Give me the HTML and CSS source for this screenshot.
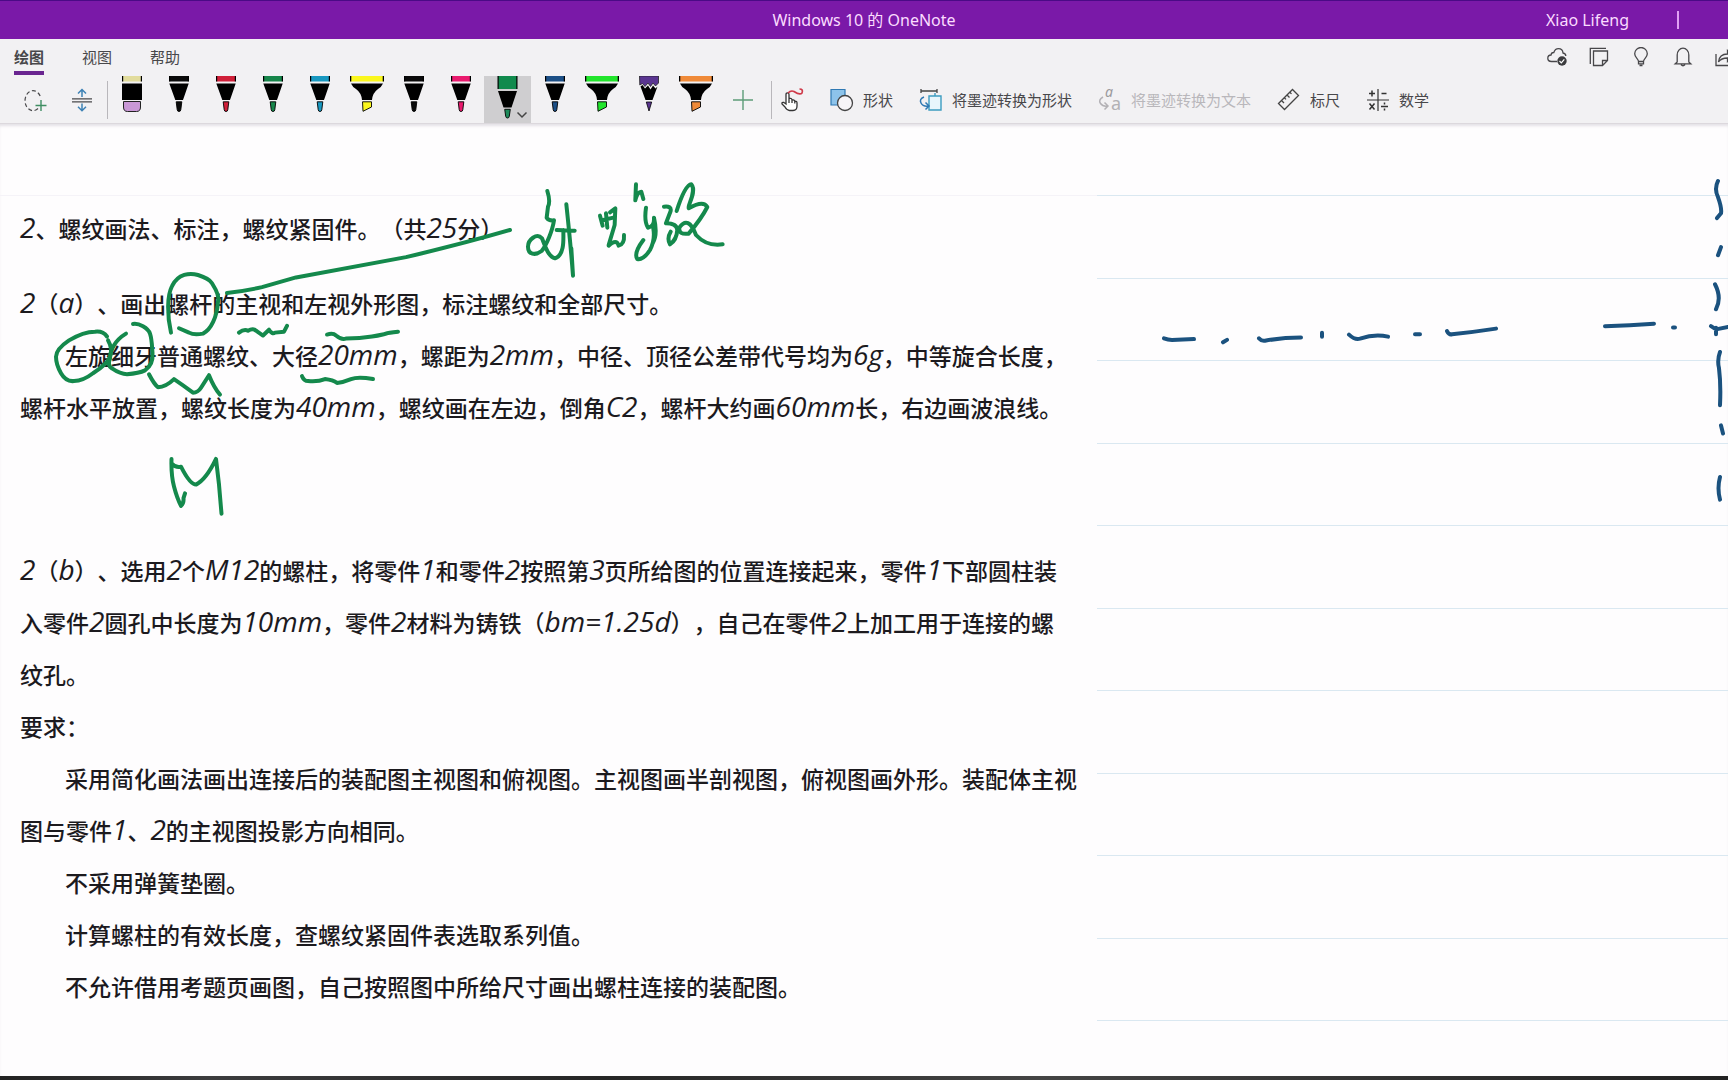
FILE: index.html
```html
<!DOCTYPE html>
<html lang="zh-CN">
<head>
<meta charset="utf-8">
<title>Windows 10 的 OneNote</title>
<link rel="stylesheet" href="styles.css">
</head>
<body>
<svg class="defs" aria-hidden="true">
  <defs>
    <symbol id="pen" viewBox="0 0 20 36">
      <path fill="currentColor" d="M.5 0h19v5.500H.5z"/><path fill="#000" d="M0 0h1.200v5.500H0zM18.800 0H20v5.500h-1.200zM.3 7.500h19.400L14 24H6.300z"/>
      <path fill="currentColor" stroke="#000" stroke-width=".9" d="M7.200 25.800h5.600l-1 8q-.2 1.700-1.800 1.700t-1.800-1.700z"/>
    </symbol>
    <symbol id="marker" viewBox="0 0 34 36">
      <path fill="currentColor" d="M.5 0h33v5.500H.5z"/><path fill="#000" d="M0 0h1.300v5.500H0zM32.700 0H34v5.500h-1.300zM1 7.500h32q-1.500 3.500-5 5.500Q22.500 17 22 24H12q-.5-7-6-11-3.500-2-5-5.500z"/>
      <path fill="currentColor" stroke="#000" stroke-width=".9" d="M12.500 25.800h9v5.200L13 35.300z"/>
    </symbol>
  </defs>
</svg>

<header class="titlebar">
  <h1 class="app-name">Windows 10 的 OneNote</h1>
  <div class="account"><span>Xiao Lifeng</span><span class="account-rule"></span></div>
</header>

<div class="ribbon">
  <div class="tabs-row">
    <nav class="tabs">
      <a class="tab tab-on" href="#draw">绘图</a>
      <a class="tab" href="#view">视图</a>
      <a class="tab" href="#help">帮助</a>
    </nav>
    <div class="quick">
      <button class="quick-button" aria-label="同步"><svg width="20" height="20" viewBox="0 0 20 20"><path class="line" d="M10 14.500H4.500C2 14.500.8 12.900.8 11.200c0-2 1.500-3.200 3.200-3.200.2-1.600 1.300-2.600 2.800-2.500C7.600 3 9.300 1.700 11.500 1.700c2.800 0 4.300 1.800 4.500 4.300 1.700.3 2.800 1.500 2.800 3"/><circle cx="15" cy="14" r="4.700" fill="#3c3c3e"/><path d="M12.500 14l1.800 1.800 3-3.500" fill="none" stroke="#fff" stroke-width="1.200"/></svg></button>
      <button class="quick-button" aria-label="便笺"><svg width="20" height="20" viewBox="0 0 20 20"><path class="line" d="M1.300 17V1.300H17M4.500 4h14v9.500l-5 5h-9zM13.500 18.500v-5h5"/></svg></button>
      <button class="quick-button" aria-label="操作说明"><svg width="20" height="20" viewBox="0 0 20 20"><path class="line" d="M7.500 14.500c0-2.500-3.800-4-3.800-7.700a6.300 6.300 0 0 1 12.600 0c0 3.700-3.800 5.200-3.800 7.700zM7.500 14.500v2.300h5v-2.300M8.500 18.500h3"/></svg></button>
      <button class="quick-button" aria-label="通知"><svg width="20" height="20" viewBox="0 0 20 20"><path class="line" d="M4.200 15V8a5.800 6.800 0 0 1 11.600 0v7l2 1.800H2.200zM8 17.500q2 2.500 4 0"/></svg></button>
      <button class="quick-button" aria-label="共享"><svg width="20" height="20" viewBox="0 0 20 20"><path class="line" d="M1 7v11.500h14M3.500 15c.5-5 3.500-8 9-8V3.500l6 5.500-6 5.500V11c-4 0-7 1-9 4z"/></svg></button>
    </div>
  </div>

  <div class="tools">
    <button class="tool" aria-label="套索选择"><svg class="mid" width="24" height="24" viewBox="0 0 24 24"><path d="M15 20.500A8 10 0 1 1 17.500 9" fill="none" stroke="#4a4a4c" stroke-width="1.200" stroke-dasharray="4 2.500"/><path d="M18 12v11M12.500 17.500h11" stroke="#3f8e62" stroke-width="1.400"/></svg></button>
    <button class="tool" aria-label="插入空间"><svg class="mid" width="22" height="24" viewBox="0 0 22 24"><path d="M1 10.800h20M1 13.800h20" stroke="#4a4a4c" stroke-width="1.300"/><path d="M11 9V1.500M7 5.500l4-4 4 4M11 15.500v7M7 18.700l4 4 4-4" fill="none" stroke="#3e82b5" stroke-width="1.500"/></svg></button>
    <span class="rule"></span>
    <div class="pens">
      <button class="tool" aria-label="橡皮擦"><svg width="20" height="36" viewBox="0 0 20 36"><path fill="#e2dc9c" d="M.5 0h19v5.500H.5z"/><path d="M0 0h1.200v5.500H0zM18.800 0H20v5.500h-1.200zM0 7.500h20V24H0z"/><path fill="#c998d6" stroke="#222" d="M1.500 25.500h17V31q0 4.500-4 4.500h-9q-4 0-4-4.500z"/></svg></button>
      <button class="tool black" aria-label="黑色笔"><svg width="20" height="36"><use href="#pen"/></svg></button>
      <button class="tool red" aria-label="红色笔"><svg width="20" height="36"><use href="#pen"/></svg></button>
      <button class="tool green" aria-label="绿色笔"><svg width="20" height="36"><use href="#pen"/></svg></button>
      <button class="tool cyan" aria-label="青色笔"><svg width="20" height="36"><use href="#pen"/></svg></button>
      <button class="tool yellow" aria-label="黄色荧光笔"><svg width="34" height="36"><use href="#marker"/></svg></button>
      <button class="tool black" aria-label="黑色细笔"><svg width="20" height="36"><use href="#pen"/></svg></button>
      <button class="tool pink" aria-label="粉色笔"><svg width="20" height="36"><use href="#pen"/></svg></button>
      <button class="tool tool-on" aria-label="绿色笔，已选择"><svg width="47" height="48" viewBox="0 0 47 48"><path fill="#118a4d" d="M14 0h19v13H14z"/><path d="M13.500 0h1.200v13h-1.200zM32.300 0h1.200v13h-1.200zM14 15h19l-5.500 16.500h-8z"/><path fill="#1d8a5a" stroke="#000" stroke-width=".9" d="M20.700 33.300h5.600l-1 7q-.2 1.700-1.800 1.700t-1.800-1.700z"/><path d="M33.500 36.500l4.500 4.500 4.500-4.500" fill="none" stroke="#444" stroke-width="1.500"/></svg></button>
      <button class="tool blue" aria-label="蓝色笔"><svg width="20" height="36"><use href="#pen"/></svg></button>
      <button class="tool lime" aria-label="绿色荧光笔"><svg width="34" height="36"><use href="#marker"/></svg></button>
      <button class="tool" aria-label="紫色铅笔"><svg width="20" height="36" viewBox="0 0 20 36"><path fill="#5a3591" stroke="#222" stroke-width=".8" d="M.5 0h19v7l-3 3-2.500-3-2.500 3.500L9 7l-3 3.500L3.500 7.500.8 9z"/><path d="M1.500 10.500l2-1.500L6 12.500 9 9.500l2.500 4L14 9.500l2.500 3 2-2L13.500 24h-7z"/><path fill="#5a3591" stroke="#000" stroke-width=".8" d="M7.300 26h5.400L10 35z"/></svg></button>
      <button class="tool orange" aria-label="橙色荧光笔"><svg width="34" height="36"><use href="#marker"/></svg></button>
      <button class="tool" aria-label="添加笔"><svg class="mid" width="20" height="20" viewBox="0 0 20 20"><path d="M10 0v20M0 10h20" stroke="#5d9c78" stroke-width="1.400"/></svg></button>
    </div>
    <span class="rule"></span>
    <div class="commands">
      <button class="command" aria-label="用触摸绘图"><svg width="24" height="24" viewBox="0 0 24 24"><path d="M6 14V6.500q0-1.700 1.500-1.700T9 6.500V12v-1.500q2.700-.8 3 1.500 2.500-.5 2.800 1.200 2.200-.2 2.200 1.800v3q0 4.500-4 4.500H9.500Q7 22.500 5 19l-3-3q-.5-2 2-1.500l2 1.500zM9 12v3M12 12v3M14.800 13v2.500" fill="#fff" stroke="#333" stroke-width="1.300"/><path d="M8 5q3-3 6-1.500Q20 7.500 22 5q1.500-4-2.500-4" fill="none" stroke="#cf3a49" stroke-width="1.700"/></svg></button>
      <button class="command"><svg width="24" height="24" viewBox="0 0 24 24"><path d="M1 1.500h14V10L9 17H1z" fill="#8dc3ea" stroke="#2f79b3" stroke-width="1.200"/><circle cx="15" cy="15" r="7.500" fill="#f7f5f8" stroke="#444" stroke-width="1.300"/></svg>形状</button>
      <button class="command"><svg width="24" height="24" viewBox="0 0 24 24"><path d="M2 3h16M2 1v4M18 1v4" stroke="#444" stroke-width="1.300"/><path d="M10 22V8h12v14zM16 5v3" fill="#e8f6fc" stroke="#3d9cc0" stroke-width="1.400"/><path d="M5 9q-5 2-3 6t8 3M6.500 14.500L10 18l-3.500 3.500" fill="none" stroke="#2f79b3" stroke-width="1.500"/></svg>将墨迹转换为形状</button>
      <button class="command" disabled><svg class="letters" width="24" height="24" viewBox="0 0 24 24"><text class="glyph-slant" x="7" y="9">a</text><text class="glyph-plain" x="13" y="22">a</text><path d="M5 9q-5 3-2.500 6.500T10 18M6.500 14.500L10 18l-3.500 3.500" fill="none" stroke="#b3b1b5" stroke-width="1.500"/></svg>将墨迹转换为文本</button>
      <button class="command"><svg width="24" height="24" viewBox="0 0 24 24"><path d="M1.500 15.500L15.500 1.500l6 6-14 14zM4.500 12.500l2.500 2.500M7.300 9.700l1.700 1.700M10 7l2.500 2.500M12.800 4.200l1.700 1.700" fill="none" stroke="#444" stroke-width="1.300"/></svg>标尺</button>
      <button class="command"><svg width="24" height="24" viewBox="0 0 24 24"><path d="M12 1v22M1 12h22" stroke="#333" stroke-width="1.200"/><path d="M3 5.500h6M6 2.500v6M15.500 5.500h5M3.500 15.500l5 6M8.500 15.500l-5 6M15 18.500h7M18.500 14.500v2M18.500 20.500v2" stroke="#333" stroke-width="1.500"/></svg>数学</button>
    </div>
  </div>
</div>

<main class="page">
  <article class="doc">
    <p><i>2</i>、螺纹画法、标注，螺纹紧固件。（共<i>25</i>分）</p>
    <p><i>2</i>（<i>a</i>）、画出螺杆的主视和左视外形图，标注螺纹和全部尺寸。<br><span class="indent"></span>左旋细牙普通螺纹、大径<i>20mm</i>，螺距为<i>2mm</i>，中径、顶径公差带代号均为<i>6g</i>，中等旋合长度，<br>螺杆水平放置，螺纹长度为<i>40mm</i>，螺纹画在左边，倒角<i>C2</i>，螺杆大约画<i>60mm</i>长，右边画波浪线。</p>
    <p class="part-b"><i>2</i>（<i>b</i>）、选用<i>2</i>个<i>M12</i>的螺柱，将零件<i>1</i>和零件<i>2</i>按照第<i>3</i>页所给图的位置连接起来，零件<i>1</i>下部圆柱装<br>入零件<i>2</i>圆孔中长度为<i>10mm</i>，零件<i>2</i>材料为铸铁（<i>bm=1.25d</i>），自己在零件<i>2</i>上加工用于连接的螺<br>纹孔。<br>要求：<br><span class="indent"></span>采用简化画法画出连接后的装配图主视图和俯视图。主视图画半剖视图，俯视图画外形。装配体主视<br>图与零件<i>1</i>、<i>2</i>的主视图投影方向相同。<br><span class="indent"></span>不采用弹簧垫圈。<br><span class="indent"></span>计算螺柱的有效长度，查螺纹紧固件表选取系列值。<br><span class="indent"></span>不允许借用考题页画图，自己按照图中所给尺寸画出螺柱连接的装配图。</p>
  </article>
  <div class="ruled"><span></span><span></span><span></span><span></span><span></span><span></span><span></span><span></span><span></span><span></span></div>

  <svg class="ink" aria-hidden="true">
    <g class="ink-green" transform="translate(0 -118.560) scale(1 .968)">
      <path d="M227 297Q245 295 262 291L296 281 406 260Q460 247 510 232"/>
      <path d="M171 338C167 320 167 300 172 290 178 277 190 276 198 278.500Q209 282 212 287 220 300 218 306C217 322 211 335 203 339Q194 341 189 338L179 333.500"/>
      <path d="M107 342Q103 336 95 337C86 337 77 341 69 346Q56 355 56 363T61 380Q66 389 74 388C81 388 88 384 93 380Q107 371 110 363T108 346"/>
      <path d="M126 339Q118 344 114 351T110 365Q107 372 112 375C119 380 122 381 127 381Q139 380 145 377C152 372 153 365 152.500 359S152 345 150 339 139 328 133 329"/>
      <path d="M239 338Q244 334 248 336 253 333 256 336L263 341 269 335Q272 340 275 338L284 337 287 331"/>
      <path d="M327 340Q333 338 336 341 342 346 346 344 360 344 372 342T386 339 398 337"/>
      <path d="M302 383Q304 388 308 388 318 389 325 386 333 387 337 390 344 389 351 386T373 386"/>
      <path d="M149 381Q154 391 158 394.500 166 394 174 386 184 393 193 400 198 400 201 395L209 382Q214 395 220 402"/>
      <path d="M171.500 468.500Q171 485 174 497T181 517Q184 514 183.500 509L185 504M171.500 473Q176 478 181 476.500 190 495 196 495 206 490 216 468.500L219 495 221.500 525"/>
    </g>
    <g class="ink-green" transform="translate(500 51) scale(.3333)">
      <path d="M142 48Q152 80 144 95L140 128Q146 138 162 136C158 165 140 210 125 228 105 243 84 238 84 215 84 195 110 172 126 190 136 215 145 245 165 250 195 240 190 190 190 165M199 88Q212 210 219 302M214 220L219 302M170 165L224 167"/>
      <path d="M300 122L308 152M318 115L322 158M330 112L346 100 344 150M310 135L340 128M344 150L326 210M326 212Q350 190 356 212 374 208 372 180"/>
      <path d="M408 28L406 76Q412 50 424 50L430 72M438 98Q432 140 444 158 464 155 462 128 474 180 458 205M430 195Q400 235 412 252 430 256 450 225 466 195 460 160M492 95Q515 92 512 108L498 145Q530 145 532 165 530 195 510 208 500 190 512 170"/>
      <path d="M530 108Q555 30 574 28C592 50 560 95 566 100Q610 75 622 96 605 130 566 176 535 180 538 158 565 120 588 180 620 215 668 208"/>
    </g>
    <g class="ink-blue" transform="translate(0 -93.070) scale(1 .8067)">
      <path d="M1164 381Q1168 383 1172 383L1194 382M1223 386l4-3M1259 381q3 4 6 3Q1283 380 1301 380M1322 374v5M1349 376.500q6 7 11 5Q1375 375 1388 379M1415 376h5M1447 372q2 5 5 4Q1475 373 1496 369M1605 366Q1630 365 1654 363M1673 367.500h2M1711 366l5 4 12-3M1716 368v8"/>
      <path d="M1718 186q-4 10 0 20 4 14 3 20l-4 6M1721 268l-3 10M1715 314q7 17 1 31M1720 398q-3 10-1 20 2 20 1 46M1721 489l2 10M1720 553q-3 14 0 28"/>
    </g>
  </svg>
</main>
<footer class="edge"></footer>
</body>
</html>
```
FILE: styles.css
```css
* { box-sizing: border-box; }

body {
  margin: 0;
  min-height: 100vh;
  display: flex;
  flex-direction: column;
  overflow-x: hidden;
  background: #fefdfe;
  color: #48474a;
  font: 15px/24px "Noto Sans", "Noto Sans CJK SC", sans-serif;
}

.defs { position: absolute; width: 0; height: 0; }

button {
  padding: 0;
  border: 0;
  background: none;
  color: inherit;
  font: inherit;
}

/* Title bar */
.titlebar {
  display: grid;
  grid-template-columns: 1fr auto 1fr;
  align-items: center;
  height: 39px;
  border-top: 1px solid #4a0a86;
  background: #7a19a8;
  color: #fbdcff;
  font-size: 16px;
}
.app-name {
  grid-column: 2;
  margin: 0;
  font-size: 16px;
  font-weight: 400;
}
.account {
  display: flex;
  justify-content: flex-end;
  align-items: center;
  gap: 48px;
  padding-right: 49px;
}
.account-rule { width: 2px; height: 18px; background: #e0a0f4; }

/* Ribbon */
.ribbon {
  height: 85px;
  overflow: hidden;
  border-bottom: 1px solid #dcd8dd;
  background: #f2f1f3;
}
.tabs-row { display: flex; justify-content: space-between; height: 37px; }
.tabs { display: flex; gap: 38px; padding-left: 14px; }
.tab {
  padding-top: 6px;
  height: 36px;
  color: inherit;
  text-decoration: none;
}
.tab-on { font-weight: 700; border-bottom: 4px solid #6a2590; }
.quick {
  display: flex;
  align-items: flex-start;
  gap: 22px;
  padding-top: 8px;
  margin-right: -7px;
}
.quick-button { display: block; width: 20px; height: 20px; }
.quick-button svg { display: block; }
.line { fill: none; stroke: #48474a; stroke-width: 1.3; }

.tools { display: flex; height: 48px; padding-left: 11px; }
.tool {
  display: flex;
  justify-content: center;
  align-items: flex-start;
  width: 47px;
  height: 48px;
}
.mid { align-self: center; }
.tool-on { background: #cfced0; }
.pens { display: flex; padding-right: 3px; }
.rule { width: 1px; height: 38px; margin: 5px 0 0 2px; background: #b9b7bb; }
.black { color: #0a0a0a; }
.red { color: #d01f38; }
.green { color: #16854a; }
.cyan { color: #1898c0; }
.yellow { color: #fbf71d; }
.pink { color: #ea1a6e; }
.blue { color: #1c4f86; }
.lime { color: #22e52c; }
.orange { color: #f08a38; }

.commands { display: flex; align-items: center; gap: 26px; padding-left: 8px; }
.command { display: flex; align-items: center; gap: 9px; white-space: nowrap; }
.command:disabled { color: #b9b7bb; }
.letters { overflow: visible; }
.glyph-slant { font: italic 14px "Noto Sans", sans-serif; fill: #9b999d; }
.glyph-plain { font: 18px "Noto Sans", sans-serif; fill: #b3b1b5; }

/* Notebook page */
.page {
  position: relative;
  flex: 1;
  display: flex;
  padding: 71px 0 55px;
  box-shadow: inset 0 3px 3px -1px #e4e1e6;
}
.doc {
  width: 1097px;
  flex: none;
  padding: 7px 20px 0;
  border-top: 1px solid #f5f3f8;
  color: #1c1a1e;
  font-size: 23px;
  font-weight: 500;
  line-height: 52px;
  white-space: nowrap;
  text-spacing-trim: space-all;
}
.doc p { margin: 0 0 23px; }
.doc .part-b { margin: 111px 0 0; }
.doc i { font: italic 400 28px/1 "Open Sans", "Noto Sans", sans-serif; }
.indent { display: inline-block; width: 45px; }

.ruled {
  flex: 1;
  display: grid;
  grid-auto-rows: 1fr;
  border-top: 1px solid #dae8f1;
}
.ruled span { border-bottom: 1px solid #dae8f1; }

.ink {
  position: absolute;
  top: 0;
  left: 0;
  width: 100%;
  height: 100%;
  fill: none;
  stroke-width: 4;
  stroke-linecap: round;
  stroke-linejoin: round;
}
.ink path { vector-effect: non-scaling-stroke; }
.ink-green { stroke: #14894c; }
.ink-blue { stroke: #1b527f; }

.edge {
  height: 4px;
  background: linear-gradient(90deg, #222, #3c3c3e 12%, #262626 35%, #444 60%, #222);
}
```
